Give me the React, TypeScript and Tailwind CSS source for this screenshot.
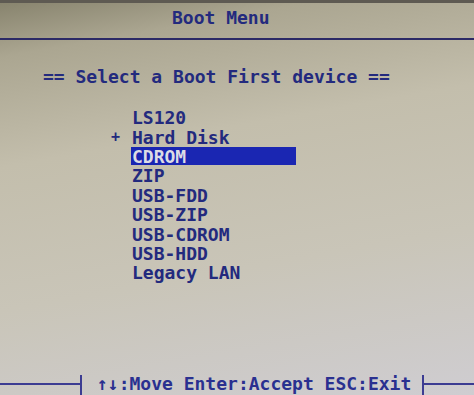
import React from 'react';

const devices = ['LS120', 'Hard Disk', 'CDROM', 'ZIP', 'USB-FDD', 'USB-ZIP', 'USB-CDROM', 'USB-HDD', 'Legacy LAN'];

export default function App() {
  const selected = 2;
  return (
    <div
      className="w-[474px] h-[395px] overflow-hidden flex flex-col bg-[linear-gradient(170deg,#86826c_0%,#aba691_12%,#c3beac_35%,#c9c5b8_65%,#cfcdd1_100%)] text-[#232a7e] font-bold text-[18px]"
      style={{ fontFamily: '"DejaVu Sans Mono", "Liberation Mono", monospace' }}
    >
      {/* title bar */}
      <div className="h-[38px] flex items-start pt-[6px] pl-[172px] border-t-[3px] border-[#5e5a52]">
        <span className="leading-[18px]">Boot Menu</span>
      </div>
      <div className="h-[2px] bg-[#2c2a66]" />

      {/* prompt */}
      <div className="pl-[43px] mt-[27px] leading-[20px]">== Select a Boot First device ==</div>

      {/* device list */}
      <div className="mt-[21px] flex flex-col">
        {devices.map((d, i) => (
          <div key={d} className="flex h-[19.4px] items-center">
            <span className="w-[131px] pl-[111px] text-[15px]">{i === 1 ? '+' : ''}</span>
            <span
              className={
                i === selected
                  ? 'w-[165px] h-[18px] flex items-center bg-[#1a26b2] text-[#dcdce6] pl-[1px]'
                  : 'pl-[1px]'
              }
            >
              {d}
            </span>
          </div>
        ))}
      </div>

      {/* footer */}
      <div className="mt-auto h-[20px] flex items-start">
        <div className="w-[80px] h-[2px] mt-[8px] bg-[#3c3c92]" />
        <div className="w-[2px] h-[20px] bg-[#3c3c92]" />
        <div className="pl-[15px] w-[340px] leading-[18px] text-[#2a3090]">↑↓:Move Enter:Accept ESC:Exit</div>
        <div className="w-[2px] h-[20px] bg-[#3c3c92]" />
        <div className="flex-1 h-[2px] mt-[8px] bg-[#3c3c92]" />
      </div>
    </div>
  );
}
